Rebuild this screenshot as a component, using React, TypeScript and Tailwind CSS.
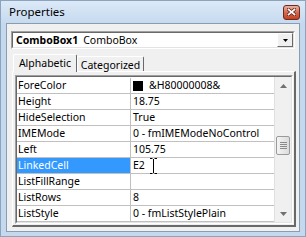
import React from "react";

const rows: [string, string][] = [
  ["ForeColor", "&H80000008&"],
  ["Height", "18.75"],
  ["HideSelection", "True"],
  ["IMEMode", "0 - fmIMEModeNoControl"],
  ["Left", "105.75"],
  ["LinkedCell", "E2"],
  ["ListFillRange", ""],
  ["ListRows", "8"],
  ["ListStyle", "0 - fmListStylePlain"],
];

function CloseButton() {
  return (
    <div className="w-[17px] h-[15px] rounded-[3px] border border-[#6f2a1d] bg-gradient-to-b from-[#eab2a4] via-[#d6694f] to-[#c4401f] flex items-center justify-center">
      <svg width="9" height="8" viewBox="0 0 9 8">
        <path d="M1.5 1.5 L7.5 6.5 M7.5 1.5 L1.5 6.5" stroke="#5a1a10" strokeWidth="3.2" strokeLinecap="square" />
        <path d="M1.5 1.5 L7.5 6.5 M7.5 1.5 L1.5 6.5" stroke="#ffffff" strokeWidth="1.7" strokeLinecap="square" />
      </svg>
    </div>
  );
}

function ComboBox() {
  return (
    <div className="ml-[4px] w-[284px] h-[18px] border-t border-l border-[#a0a0a0] border-b border-r border-b-white border-r-white">
      <div className="w-full h-full border-t border-l border-[#696969] border-b border-r border-b-[#e3e3e3] border-r-[#e3e3e3] bg-white flex items-center">
        <div className="flex-1 pl-[3px] text-[10.5px] leading-[14px] text-black whitespace-nowrap">
          <span className="font-bold">ComboBox1</span>
          <span className="ml-[5px]">ComboBox</span>
        </div>
        <div className="w-[16px] h-[14px] bg-[#f0f0f0] border-t border-l border-white border-b border-r border-b-[#696969] border-r-[#696969] flex items-center justify-center">
          <svg width="5" height="3" viewBox="0 0 5 3">
            <path d="M0 0 H5 L2.5 3 Z" fill="#000" />
          </svg>
        </div>
      </div>
    </div>
  );
}

function IBeam() {
  return (
    <svg width="7" height="16" viewBox="0 0 7 16" className="absolute left-[19px] top-0">
      <path d="M0 0.5 H2.5 M4.5 0.5 H7 M3.5 1 V15 M0 15.5 H2.5 M4.5 15.5 H7" stroke="#000" strokeWidth="1" />
    </svg>
  );
}

function ScrollBar() {
  return (
    <div className="w-[17px] flex flex-col bg-[#f0f0f0] border-l border-[#e0e0e0]">
      <div className="h-[17px] flex items-center justify-center">
        <svg width="7" height="4" viewBox="0 0 7 4">
          <path d="M0 4 H7 L3.5 0 Z" fill="#707070" />
        </svg>
      </div>
      <div className="flex-1">
        <div className="mt-[42px] mx-[1px] h-[19px] rounded-[2px] border border-[#9a9a9a] bg-gradient-to-r from-[#f4f4f4] to-[#dcdcdc] flex flex-col items-center justify-center gap-[1px]">
          <div className="w-[7px] h-[1px] bg-[#8a8a8a]" />
          <div className="w-[7px] h-[1px] bg-[#8a8a8a]" />
          <div className="w-[7px] h-[1px] bg-[#8a8a8a]" />
          <div className="w-[7px] h-[1px] bg-[#8a8a8a]" />
        </div>
      </div>
      <div className="h-[17px] flex items-center justify-center">
        <svg width="7" height="4" viewBox="0 0 7 4">
          <path d="M0 0 H7 L3.5 4 Z" fill="#707070" />
        </svg>
      </div>
    </div>
  );
}

function Grid() {
  return (
    <div className="w-[278px] h-[149px] border-t border-l border-[#a0a0a0] border-b border-r border-b-white border-r-white">
      <div className="w-full h-full border-t border-l border-[#696969] border-b border-r border-b-[#e3e3e3] border-r-[#e3e3e3] bg-white flex">
        <div className="w-[257px] pt-[1px]">
          {rows.map(([name, value]) => {
            const sel = name === "LinkedCell";
            return (
              <div key={name} className="h-[16px] flex border-b border-[#c0c0c0] text-[10.5px] leading-[15px] whitespace-nowrap">
                <div className={`w-[113px] pl-[1px] ${sel ? "bg-[#3399ff] text-white" : "text-black"}`}>{name}</div>
                <div className="w-[144px] border-l border-[#c0c0c0] pl-[2px] text-black relative flex items-center">
                  {name === "ForeColor" && <div className="w-[10px] h-[10px] bg-black mr-[6px]" />}
                  <span>{value}</span>
                  {sel && <IBeam />}
                </div>
              </div>
            );
          })}
        </div>
        <ScrollBar />
      </div>
    </div>
  );
}

function Tabs() {
  return (
    <div className="flex items-end h-[17px] ml-[6px] relative z-10">
      <div className="h-[18px] -mb-px w-[64px] bg-[#f0f0f0] border-t border-l border-white border-r border-r-[#696969] rounded-t-[2px] flex items-start justify-center pt-[2px] text-[10.5px] leading-[13px] text-black">
        Alphabetic
      </div>
      <div className="h-[15px] w-[67px] bg-[#f0f0f0] border-t border-l border-white border-r border-r-[#696969] rounded-t-[2px] flex items-start justify-center pt-[2px] text-[10.5px] leading-[13px] text-black">
        Categorized
      </div>
    </div>
  );
}

export default function App() {
  return (
    <div className="w-[306px] h-[237px] bg-[#c4d8ee] border border-[#8ca3bd] flex flex-col font-['Noto_Sans','Liberation_Sans',sans-serif]">
      <div className="h-[22px] flex items-center justify-between pl-[8px] pr-[5px] bg-gradient-to-b from-[#dce9f7] to-[#c6daef]">
        <span className="text-[11.5px] text-black leading-none">Properties</span>
        <CloseButton />
      </div>
      <div className="mx-[5px] h-[209px] border border-[#8a9cb2] bg-[#f0f0f0] pt-[7px]">
        <ComboBox />
        <div className="mt-[5px]">
          <Tabs />
          <div className="ml-[5px] w-[284px] h-[156px] border-t border-l border-white border-b-2 border-r-2 border-b-[#696969] border-r-[#696969] pt-[3px] pl-[2px]">
            <Grid />
          </div>
        </div>
      </div>
    </div>
  );
}
